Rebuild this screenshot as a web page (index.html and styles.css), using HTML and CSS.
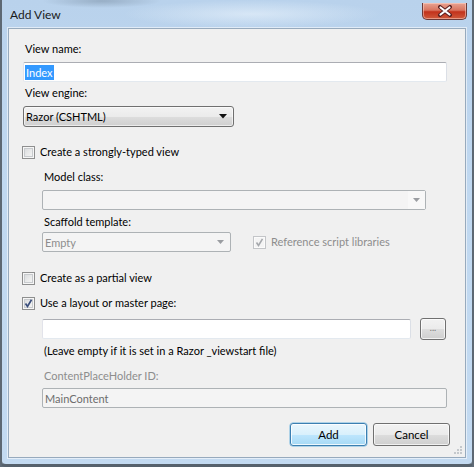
FILE: index.html
```html
<!DOCTYPE html>
<html>
<head>
<meta charset="utf-8">
<title>Add View</title>
<link rel="stylesheet" href="styles.css">
</head>
<body>
<div class="window">
  <div class="titlebar">
    <span class="title">Add View</span>
    <div class="close">
      <svg width="16" height="12" viewBox="0 0 16 12"><path d="M3 2 L13 10 M13 2 L3 10" stroke="#5a2020" stroke-width="4" stroke-linecap="round"/><path d="M3.5 2.5 L12.5 9.5 M12.5 2.5 L3.5 9.5" stroke="#ffffff" stroke-width="2.2" stroke-linecap="round"/></svg>
    </div>
  </div>
  <div class="panel">
    <div class="lbl">View name:</div>
    <div class="textbox w-name"><span class="selected">Index</span></div>
    <div class="lbl gap-l2">View engine:</div>
    <div class="combo w-razor">
      <span>Razor (CSHTML)</span>
      <svg class="arrow" width="8" height="5" viewBox="0 0 8 5"><path d="M0 0 H8 L4 4.5 Z" fill="#111"/></svg>
    </div>
    <div class="check-row gap-c1">
      <span class="cb"></span><span>Create a strongly-typed view</span>
    </div>
    <div class="indent">
      <div class="lbl gap-m1">Model class:</div>
      <div class="combo disabled w-model">
        <span></span>
        <span class="dd-btn"><svg width="7" height="4" viewBox="0 0 7 4"><path d="M0 0 H7 L3.5 4 Z" fill="#9a9da1"/></svg></span>
      </div>
      <div class="lbl gap-m2">Scaffold template:</div>
      <div class="scaffold-row">
        <div class="combo disabled w-scaffold">
          <span class="dim">Empty</span>
          <svg class="arrow" width="7" height="4" viewBox="0 0 7 4"><path d="M0 0 H7 L3.5 4 Z" fill="#9a9da1"/></svg>
        </div>
        <div class="check-row dim">
          <span class="cb cb-disabled"><svg width="11" height="11" viewBox="0 0 11 11"><path d="M2.5 5.5 L4.5 8.5 L8.5 1.8" fill="none" stroke="#a6a9ad" stroke-width="1.6"/></svg></span><span>Reference script libraries</span>
        </div>
      </div>
    </div>
    <div class="check-row gap-c2">
      <span class="cb"></span><span>Create as a partial view</span>
    </div>
    <div class="check-row gap-c3">
      <span class="cb"><svg width="11" height="11" viewBox="0 0 11 11"><path d="M2.5 5.5 L4.5 8.5 L8.5 1.8" fill="none" stroke="#3b4f7d" stroke-width="1.7"/></svg></span><span>Use a layout or master page:</span>
    </div>
    <div class="indent">
      <div class="layout-row">
        <div class="textbox w-layout"></div>
        <div class="btn btn-browse">...</div>
      </div>
      <div class="lbl gap-h">(Leave empty if it is set in a Razor _viewstart file)</div>
      <div class="lbl dim gap-p">ContentPlaceHolder ID:</div>
      <div class="textbox disabled w-main">MainContent</div>
    </div>
    <div class="footer">
      <div class="btn btn-default">Add</div>
      <div class="btn">Cancel</div>
    </div>
    <svg class="grip" width="8" height="8" viewBox="0 0 8 8">
      <rect x="6" y="0" width="2" height="2" fill="#c4c8cc"/>
      <rect x="3" y="3" width="2" height="2" fill="#c4c8cc"/>
      <rect x="6" y="3" width="2" height="2" fill="#c4c8cc"/>
      <rect x="0" y="6" width="2" height="2" fill="#c4c8cc"/>
      <rect x="3" y="6" width="2" height="2" fill="#c4c8cc"/>
      <rect x="6" y="6" width="2" height="2" fill="#c4c8cc"/>
    </svg>
  </div>
</div>
</body>
</html>
```
FILE: styles.css
```css
* { box-sizing: border-box; }
html, body { margin: 0; padding: 0; }
body {
  background: #5f6b77;
  font-family: "Lato", "Noto Sans", sans-serif;
  font-size: 11px;
  color: #000;
}
.window {
  width: 474px;
  height: 467px;
  display: flex;
  flex-direction: column;
  background: linear-gradient(180deg, #b9d2ec 0%, #c0d8f0 40%, #c3daf1 100%);
  border-left: 2px solid #5d6873;
  border-right: 2px solid #5d6873;
  border-bottom: 3px solid #56616c;
  border-radius: 0 0 6px 6px;
  padding: 0 6px 6px 6px;
  position: relative;
  overflow: hidden;
}
.window::before {
  content: "";
  position: absolute;
  left: 40px; top: -6px;
  width: 120px; height: 14px;
  background: radial-gradient(ellipse at center, rgba(110,130,150,0.45), rgba(110,130,150,0) 70%);
}
.window::after {
  content: "";
  position: absolute;
  left: 120px; top: 0;
  width: 260px; height: 28px;
  background: radial-gradient(ellipse at center, rgba(235,244,252,0.6), rgba(235,244,252,0) 70%);
  pointer-events: none;
}
.titlebar {
  height: 28px;
  display: flex;
  justify-content: space-between;
  align-items: flex-start;
  margin: 0 -1px 0 -6px;
  padding-left: 8px;
  position: relative;
  z-index: 1;
}
.title {
  margin-top: 7px;
  line-height: 16px;
  font-size: 12px;
  color: #1a1a1a;
}
.close {
  margin-top: 3px;
  width: 45px;
  height: 17px;
  border: 1px solid #6b3a38;
  border-top: none;
  border-radius: 0 0 5px 5px;
  background: linear-gradient(180deg, #e8a493 0%, #d9745f 45%, #c2321b 55%, #cf5a3c 100%);
  box-shadow: inset 0 0 0 1px rgba(255,220,210,0.5);
  display: flex;
  align-items: center;
  justify-content: center;
}
.panel {
  position: relative;
  height: 430px;
  background: #f0f0f0;
  border: 1px solid #97aabd;
  box-shadow: 0 0 0 1px rgba(255,255,255,0.55);
  padding: 12px 0 0 14px;
  display: flex;
  flex-direction: column;
  align-items: flex-start;
}
.lbl {
  line-height: 16px;
  height: 16px;
  padding-left: 2px;
  white-space: nowrap;
}
.dim { color: #8d8d8d; }
.textbox {
  height: 20px;
  margin-top: 5px;
  background: #fff;
  border: 1px solid;
  border-color: #abadb3 #dbdfe6 #e3e9ef #e2e3ea;
  border-radius: 2px;
  display: flex;
  align-items: center;
  padding-left: 1px;
  white-space: nowrap;
}
.textbox.disabled {
  background: #f4f4f4;
  border-color: #adb2b5;
  color: #6d6d6d;
  padding-left: 2px;
}
.selected {
  background: #3399ff;
  color: #fff;
  padding: 0 1px;
  line-height: 15px;
}
.w-name { width: 424px; }
.gap-l2 { margin-top: 3px; }
.combo {
  margin-top: 5px;
  height: 21px;
  border: 1px solid #707070;
  border-radius: 3px;
  background: linear-gradient(180deg, #f2f2f2 0%, #ebebeb 50%, #dddddd 51%, #cfcfcf 100%);
  box-shadow: inset 0 0 0 1px rgba(255,255,255,0.6);
  display: flex;
  align-items: center;
  justify-content: space-between;
  padding: 0 6px 0 2px;
}
.combo.disabled {
  background: #f4f4f4;
  border-color: #adb2b5;
  box-shadow: none;
  border-radius: 2px;
  height: 20px;
}
.w-razor { width: 211px; }
.w-model { width: 384px; padding-right: 0; margin-top: 5px; }
.w-scaffold { width: 189px; margin-top: 0; padding-right: 6px; padding-left: 2px; }
.dd-btn {
  width: 17px;
  height: 18px;
  background: #f8f8f8;
  display: flex;
  align-items: center;
  justify-content: center;
}
.check-row {
  height: 16px;
  line-height: 16px;
  display: flex;
  align-items: center;
  gap: 5px;
  white-space: nowrap;
}
.cb {
  width: 13px;
  height: 13px;
  flex: none;
  border: 1px solid #8e8f8f;
  background: linear-gradient(135deg, #d4d6d9 0%, #eceded 60%, #f8f8f8 100%);
  box-shadow: inset 0 0 0 1px #f6f6f6, inset 0 0 0 2px #c8cbce;
  display: flex;
  align-items: center;
  justify-content: center;
  margin-left: -1px;
}
.cb-disabled {
  border-color: #c3c5c8;
  background: #f4f4f4;
  box-shadow: inset 0 0 0 1px #fbfbfb;
}
.gap-c1 { margin-top: 17px; }
.indent {
  display: flex;
  flex-direction: column;
  align-items: flex-start;
  padding-left: 19px;
}
.gap-m1 { margin-top: 9px; }
.gap-m2 { margin-top: 4px; }
.scaffold-row {
  margin-top: 2px;
  display: flex;
  align-items: center;
  gap: 23px;
}
.gap-c2 { margin-top: 18px; }
.gap-c3 { margin-top: 9px; }
.layout-row {
  margin-top: 7px;
  height: 22px;
  display: flex;
  align-items: center;
  gap: 9px;
}
.w-layout { width: 369px; margin-top: 0; }
.btn {
  width: 77px;
  height: 23px;
  border: 1px solid #707070;
  border-radius: 3px;
  background: linear-gradient(180deg, #f2f2f2 0%, #ebebeb 50%, #dddddd 51%, #cfcfcf 100%);
  box-shadow: inset 0 0 0 1px rgba(255,255,255,0.7);
  display: flex;
  align-items: center;
  justify-content: center;
  font-size: 11.5px;
}
.btn-browse {
  width: 26px;
  height: 22px;
  color: #777;
  font-size: 9px;
  line-height: 10px;
  padding-bottom: 2px;
}
.gap-h { margin-top: 3px; }
.gap-p { margin-top: 9px; }
.w-main { width: 405px; margin-top: 4px; }
.footer {
  margin-top: 15px;
  align-self: stretch;
  display: flex;
  justify-content: flex-end;
  gap: 6px;
  padding-right: 15px;
}
.btn-default {
  border-color: #3c7fb1;
  background: linear-gradient(180deg, #eaf6fd 0%, #d9f0fc 50%, #bee6fd 51%, #a7d9f5 100%);
  box-shadow: inset 0 0 0 1px rgba(255,255,255,0.8), 0 0 0 0.5px #6fb3dd;
}
.grip {
  position: absolute;
  right: 3px;
  bottom: 3px;
}
```
